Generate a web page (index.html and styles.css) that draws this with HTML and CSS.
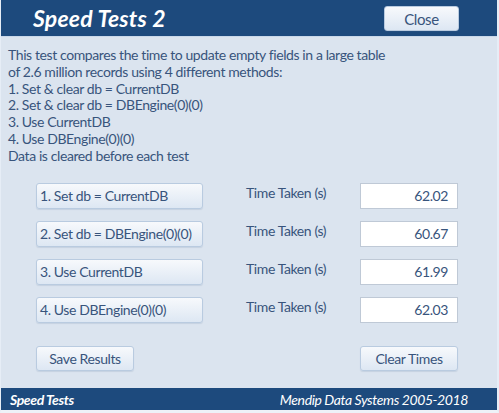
FILE: index.html
```html
<!DOCTYPE html>
<html>
<head>
<meta charset="utf-8">
<link rel="stylesheet" href="styles.css">
</head>
<body>
<div class="app">
  <header class="header">
    <h1 class="title">Speed Tests 2</h1>
    <button class="btn btn-close">Close</button>
  </header>
  <main class="content">
    <div class="intro">
      <p>This test compares the time to update empty fields in a large table</p>
      <p>of 2.6 million records using 4 different methods:</p>
      <p>1. Set &amp; clear db = CurrentDB</p>
      <p>2. Set &amp; clear db = DBEngine(0)(0)</p>
      <p>3. Use CurrentDB</p>
      <p>4. Use DBEngine(0)(0)</p>
      <p>Data is cleared before each test</p>
    </div>
    <div class="tests">
      <div class="row">
        <button class="btn btn-test">1. Set db = CurrentDB</button>
        <span class="label">Time Taken (s)</span>
        <div class="value">62.02</div>
      </div>
      <div class="row">
        <button class="btn btn-test">2. Set db = DBEngine(0)(0)</button>
        <span class="label">Time Taken (s)</span>
        <div class="value">60.67</div>
      </div>
      <div class="row">
        <button class="btn btn-test">3. Use CurrentDB</button>
        <span class="label">Time Taken (s)</span>
        <div class="value">61.99</div>
      </div>
      <div class="row">
        <button class="btn btn-test">4. Use DBEngine(0)(0)</button>
        <span class="label">Time Taken (s)</span>
        <div class="value">62.03</div>
      </div>
    </div>
    <div class="actions">
      <button class="btn btn-action">Save Results</button>
      <button class="btn btn-action">Clear Times</button>
    </div>
  </main>
  <footer class="footer">
    <span class="foot-left">Speed Tests</span>
    <span class="foot-right">Mendip Data Systems 2005-2018</span>
  </footer>
</div>
</body>
</html>
```
FILE: styles.css
```css
* { box-sizing: border-box; }
html, body { margin: 0; padding: 0; background: #eef2f8; }
body { font-family: Lato, "Open Sans", sans-serif; }

.app {
  width: 499px;
  height: 413px;
  display: flex;
  flex-direction: column;
  background: #dbe4ef;
  border-left: 1px solid #e6edf6;
  border-right: 2px solid #e6edf6;
  border-bottom: 3px solid #eef2f8;
  letter-spacing: -0.4px;
}

.header {
  height: 37px;
  flex: none;
  background: #1d4a7d;
  display: flex;
  align-items: center;
  justify-content: space-between;
  padding: 0 38px 0 32px;
  border-bottom: 1px solid #c9d8ea;
}

.title {
  margin: 0;
  color: #ffffff;
  font-size: 23px;
  font-weight: 700;
  font-style: italic;
  letter-spacing: 0.2px;
}

.btn {
  font-family: Lato, "Open Sans", sans-serif;
  font-size: 14px;
  letter-spacing: -0.4px;
  color: #38547c;
  background: linear-gradient(#f7f9fc, #dde7f3);
  border: 1px solid #b9cbe0;
  border-radius: 3px;
  padding: 0 8px;
  height: 26px;
  text-align: left;
  white-space: nowrap;
  box-shadow: 0 1px 1px rgba(80, 110, 150, 0.15);
}

.btn-close {
  width: 75px;
  height: 25px;
  text-align: center;
  margin-top: 1px;
  font-size: 15px;
}

.content {
  flex: 1;
  padding: 10px 0 0 7px;
  display: flex;
  flex-direction: column;
}

.intro p {
  margin: 0;
  font-size: 14px;
  line-height: 16.8px;
  color: #38547c;
}

.tests {
  margin-top: 18px;
  padding-left: 28px;
  display: flex;
  flex-direction: column;
  gap: 12px;
}

.row {
  display: flex;
  align-items: flex-start;
  height: 26px;
}

.btn-test {
  width: 167px;
  padding-left: 3px;
}

.label {
  margin-left: 43px;
  width: 114px;
  font-size: 14px;
  color: #38547c;
  margin-top: 1px;
}

.value {
  width: 98px;
  height: 26px;
  background: #ffffff;
  border: 1px solid #bfc9d6;
  text-align: right;
  padding: 3px 9px 0 0;
  font-size: 14px;
  color: #38547c;
}

.actions {
  margin-top: 23px;
  padding-left: 28px;
  display: flex;
  gap: 226px;
}

.btn-action {
  width: 98px;
  height: 25px;
  text-align: center;
}

.footer {
  height: 22px;
  flex: none;
  background: #1d4a7d;
  color: #ffffff;
  display: flex;
  align-items: center;
  justify-content: space-between;
  padding: 0 29px 0 9px;
  font-size: 14px;
  font-style: italic;
}

.foot-left { font-weight: 700; }
```
